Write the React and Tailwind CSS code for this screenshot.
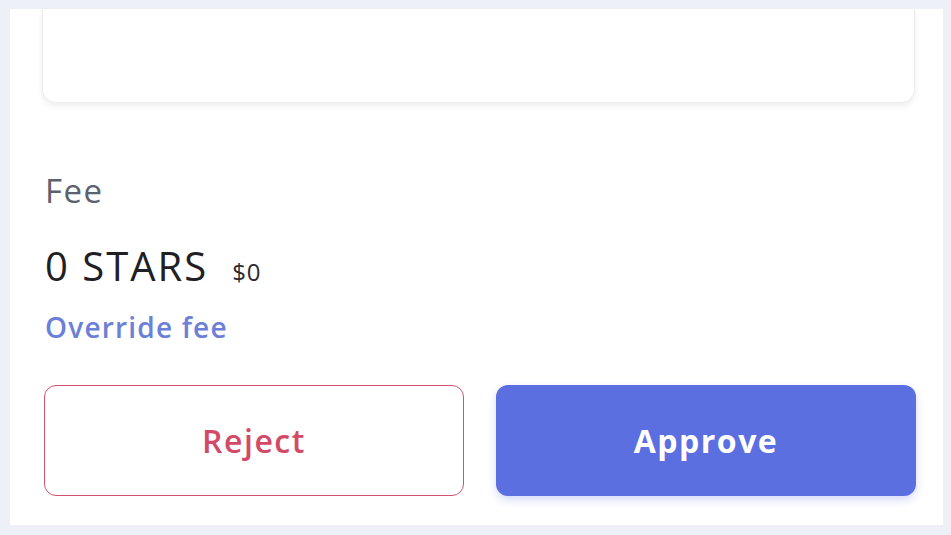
export default function App() {
  const font = { fontFamily: '"Open Sans", "Noto Sans", sans-serif' };
  return (
    <div className="w-[951px] h-[535px] bg-[#eef0f7] overflow-hidden pt-[9px] pl-[10px]" style={font}>
      <div className="w-[933px] h-[516px] bg-white flex flex-col">
        <div className="ml-[32px] w-[873px] h-[94px] bg-white rounded-b-[14px] border border-t-0 border-[#ececef] shadow-[0_3px_6px_rgba(0,0,0,0.07)]" />
        <div className="pl-[35px] pr-[27px] flex flex-col">
          <div className="mt-[71px] text-[33px] leading-none tracking-[1.5px] text-[#5b616e]">Fee</div>
          <div className="mt-[39px] flex items-baseline gap-[24px] leading-none">
            <span className="text-[40px] tracking-[2px] text-[#1f2024]">0 STARS</span>
            <span className="text-[24px] tracking-[1px] text-[#2a2b30]">$0</span>
          </div>
          <div className="mt-[27px] text-[28px] leading-none font-semibold tracking-[1.2px] text-[#6b80d6]">Override fee</div>
          <div className="mt-[44px] ml-[-1px] flex gap-[32px]">
            <button className="w-[420px] h-[111px] rounded-[12px] border-[1.5px] border-[#d0546d] bg-white text-[#d24a67] text-[32px] font-semibold tracking-[1.5px]">
              Reject
            </button>
            <button className="w-[420px] h-[111px] rounded-[12px] bg-[#5b6fe0] text-white text-[32px] font-bold tracking-[1.5px] shadow-[0_4px_8px_rgba(91,111,224,0.25)]">
              Approve
            </button>
          </div>
        </div>
      </div>
    </div>
  );
}
